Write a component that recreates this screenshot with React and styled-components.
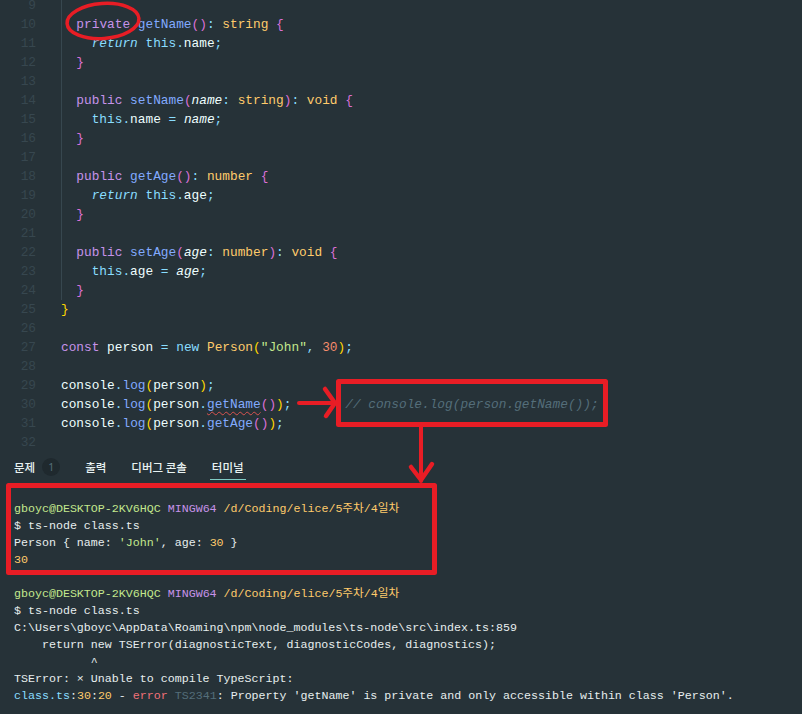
import React from 'react';
import styled, { createGlobalStyle, css } from 'styled-components';

const GlobalStyle = createGlobalStyle`
  html, body {
    margin: 0;
    padding: 0;
    background: #263238;
  }
  #root {
    width: 802px;
    height: 714px;
    overflow: hidden;
  }
`;

const colors = {
  K: '#C792EA',
  F: '#82AAFF',
  T: '#FFCB6B',
  P: '#89DDFF',
  W: '#EEFFFF',
  B1: '#FFD700',
  B2: '#DA70D6',
  S: '#C3E88D',
  N: '#F78C6C',
  C: '#546E7A',
  R: '#F07178',
};

const Page = styled.div`
  position: relative;
  width: 802px;
  height: 714px;
  overflow: hidden;
  background: #263238;
`;

const Editor = styled.div`
  margin-top: -4px;
  font-family: 'Liberation Mono', 'DejaVu Sans Mono', monospace;
  font-size: 12.8px;
  height: 454px;
`;

const Row = styled.div`
  display: grid;
  grid-template-columns: 36px 1fr;
  column-gap: 25px;
  height: 19px;
  line-height: 19px;
  white-space: pre;
`;

const LineNo = styled.span`
  text-align: right;
  color: #37474f;
`;

const Code = styled.span`
  display: flex;
  align-items: stretch;
`;

const Indent = styled.span`
  display: inline-block;
  width: 2ch;
  flex: none;
  ${({ $guide }) =>
    $guide &&
    css`
      box-shadow: inset 1px 0 0 #37474f;
    `}
`;

const Tok = styled.span`
  color: ${({ $c }) => colors[$c] || $c};
  font-style: ${({ $i }) => ($i ? 'italic' : 'normal')};
  ${({ $squiggle }) =>
    $squiggle &&
    css`
      text-decoration: underline wavy #d9534f;
      text-decoration-thickness: 1px;
      text-underline-offset: 3px;
    `}
`;

const TabBar = styled.div`
  display: flex;
  align-items: flex-start;
  gap: 21px;
  padding: 4px 0 3px 12px;
  height: 26px;
  font-family: 'Noto Sans CJK KR', 'Noto Sans', sans-serif;
  font-size: 11.5px;
  font-weight: 500;
`;

const Tab = styled.div`
  display: flex;
  align-items: center;
  gap: 7px;
  height: 25px;
  padding: 0 2px;
  color: #e8f2f2;
  ${({ $active }) =>
    $active &&
    css`
      border-bottom: 1px solid #80cbc4;
    `}
`;

const Badge = styled.span`
  display: inline-flex;
  align-items: center;
  justify-content: center;
  width: 18px;
  height: 18px;
  border-radius: 50%;
  background: #1f292e;
  color: #546e7a;
  font-family: 'Noto Sans', sans-serif;
  font-size: 10.5px;
  font-weight: 400;
`;

const Terminal = styled.div`
  padding-left: 14px;
  font-family: 'Liberation Mono', 'Noto Sans CJK KR', monospace;
  font-size: 11.65px;
  color: #e6eeee;
`;

const TLine = styled.div`
  height: 17px;
  line-height: 17px;
  white-space: pre;
`;

const Overlay = styled.svg`
  position: absolute;
  top: 0;
  left: 0;
  pointer-events: none;
`;

// [line number, indent levels, guide, tokens]
const code = [
  [9, 1, true, []],
  [10, 1, true, [['K', 'private'], ['W', ' '], ['F', 'getName'], ['B2', '()'], ['P', ':'], ['W', ' '], ['T', 'string'], ['W', ' '], ['B2', '{']]],
  [11, 2, true, [['P', 'return', true], ['W', ' '], ['P', 'this'], ['P', '.'], ['W', 'name'], ['P', ';']]],
  [12, 1, true, [['B2', '}']]],
  [13, 1, true, []],
  [14, 1, true, [['K', 'public'], ['W', ' '], ['F', 'setName'], ['B2', '('], ['W', 'name', true], ['P', ':'], ['W', ' '], ['T', 'string'], ['B2', ')'], ['P', ':'], ['W', ' '], ['T', 'void'], ['W', ' '], ['B2', '{']]],
  [15, 2, true, [['P', 'this'], ['P', '.'], ['W', 'name'], ['W', ' '], ['P', '='], ['W', ' '], ['W', 'name', true], ['P', ';']]],
  [16, 1, true, [['B2', '}']]],
  [17, 1, true, []],
  [18, 1, true, [['K', 'public'], ['W', ' '], ['F', 'getAge'], ['B2', '()'], ['P', ':'], ['W', ' '], ['T', 'number'], ['W', ' '], ['B2', '{']]],
  [19, 2, true, [['P', 'return', true], ['W', ' '], ['P', 'this'], ['P', '.'], ['W', 'age'], ['P', ';']]],
  [20, 1, true, [['B2', '}']]],
  [21, 1, true, []],
  [22, 1, true, [['K', 'public'], ['W', ' '], ['F', 'setAge'], ['B2', '('], ['W', 'age', true], ['P', ':'], ['W', ' '], ['T', 'number'], ['B2', ')'], ['P', ':'], ['W', ' '], ['T', 'void'], ['W', ' '], ['B2', '{']]],
  [23, 2, true, [['P', 'this'], ['P', '.'], ['W', 'age'], ['W', ' '], ['P', '='], ['W', ' '], ['W', 'age', true], ['P', ';']]],
  [24, 1, true, [['B2', '}']]],
  [25, 0, false, [['B1', '}']]],
  [26, 0, false, []],
  [27, 0, false, [['K', 'const'], ['W', ' '], ['W', 'person'], ['W', ' '], ['P', '='], ['W', ' '], ['P', 'new'], ['W', ' '], ['T', 'Person'], ['B1', '('], ['S', '"John"'], ['P', ','], ['W', ' '], ['N', '30'], ['B1', ')'], ['P', ';']]],
  [28, 0, false, []],
  [29, 0, false, [['W', 'console'], ['P', '.'], ['F', 'log'], ['B1', '('], ['W', 'person'], ['B1', ')'], ['P', ';']]],
  [30, 0, false, [['W', 'console'], ['P', '.'], ['F', 'log'], ['B1', '('], ['W', 'person'], ['P', '.'], ['F', 'getName', false, true], ['B2', '()'], ['B1', ')'], ['P', ';']]],
  [31, 0, false, [['W', 'console'], ['P', '.'], ['F', 'log'], ['B1', '('], ['W', 'person'], ['P', '.'], ['F', 'getAge'], ['B2', '()'], ['B1', ')'], ['P', ';']]],
  [32, 0, false, []],
];

const prompt = [
  ['S', 'gboyc@DESKTOP-2KV6HQC'],
  [null, ' '],
  ['K', 'MINGW64'],
  [null, ' '],
  ['T', '/d/Coding/elice/5주차/4일차'],
];

const terminal = [
  [],
  prompt,
  [[null, '$ ts-node class.ts']],
  [[null, 'Person { name: '], ['S', "'John'"], [null, ', age: '], ['T', '30'], [null, ' }']],
  [['T', '30']],
  [],
  prompt,
  [[null, '$ ts-node class.ts']],
  [[null, 'C:\\Users\\gboyc\\AppData\\Roaming\\npm\\node_modules\\ts-node\\src\\index.ts:859']],
  [[null, '    return new TSError(diagnosticText, diagnosticCodes, diagnostics);']],
  [[null, '           ^']],
  [[null, 'TSError: × Unable to compile TypeScript:']],
  [
    ['P', 'class.ts'],
    [null, ':'],
    ['T', '30'],
    [null, ':'],
    ['T', '20'],
    [null, ' - '],
    ['R', 'error'],
    [null, ' '],
    ['C', 'TS2341'],
    [null, ": Property 'getName' is private and only accessible within class 'Person'."],
  ],
];

const CodeLine = ({ n, indent, guide, tokens }) => (
  <Row>
    <LineNo>{n}</LineNo>
    <Code>
      {Array.from({ length: indent }).map((_, i) => (
        <Indent key={i} $guide={guide && i === 0} />
      ))}
      {tokens.map(([c, text, italic, squiggle], i) => (
        <Tok key={i} $c={c} $i={italic} $squiggle={squiggle}>
          {text}
        </Tok>
      ))}
      {n === 30 && (
        <Tok $c="C" $i style={{ marginLeft: '7ch' }}>
          {'// console.log(person.getName());'}
        </Tok>
      )}
    </Code>
  </Row>
);

const Annotations = () => (
  <Overlay width="802" height="714" viewBox="0 0 802 714">
    <g fill="none" stroke="#E81D25" strokeLinecap="round" strokeLinejoin="round">
      <ellipse cx="103" cy="21" rx="36" ry="17.5" strokeWidth="3.5" transform="rotate(-4 103 21)" />
      <line x1="299" y1="403" x2="334" y2="403" strokeWidth="4" />
      <polyline points="325,389 335,403 326,416" strokeWidth="4.5" />
      <rect x="338.5" y="381.5" width="267" height="43" strokeWidth="5" strokeLinecap="butt" />
      <line x1="421" y1="427" x2="421" y2="481" strokeWidth="4" />
      <polyline points="411,467 421,480 432,464" strokeWidth="4.5" />
      <rect x="8.5" y="485.5" width="426" height="87" strokeWidth="5" strokeLinecap="butt" />
    </g>
  </Overlay>
);

const App = () => (
  <Page>
    <GlobalStyle />
    <Editor>
      {code.map(([n, indent, guide, tokens]) => (
        <CodeLine key={n} n={n} indent={indent} guide={guide} tokens={tokens} />
      ))}
    </Editor>
    <TabBar>
      <Tab>
        문제<Badge>1</Badge>
      </Tab>
      <Tab>출력</Tab>
      <Tab>디버그 콘솔</Tab>
      <Tab $active>터미널</Tab>
    </TabBar>
    <Terminal>
      {terminal.map((parts, i) => (
        <TLine key={i}>
          {parts.map(([c, text], j) =>
            c ? (
              <Tok key={j} $c={c}>
                {text}
              </Tok>
            ) : (
              <span key={j}>{text}</span>
            )
          )}
        </TLine>
      ))}
    </Terminal>
    <Annotations />
  </Page>
);

export default App;
